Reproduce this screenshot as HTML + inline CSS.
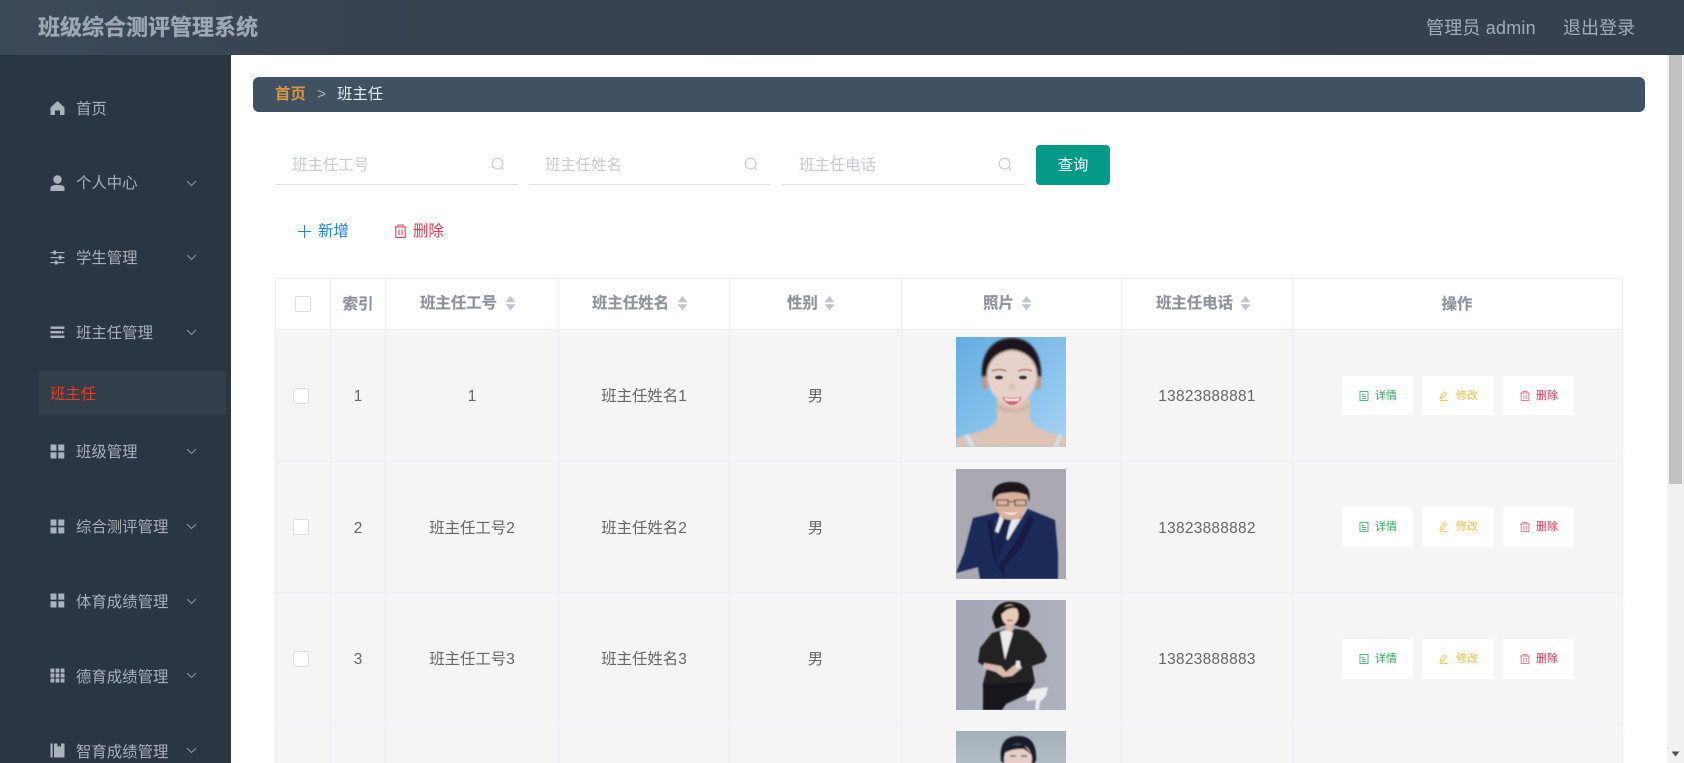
<!DOCTYPE html>
<html lang="zh-CN">
<head>
<meta charset="utf-8">
<title>班级综合测评管理系统</title>
<style>
html,body{margin:0;padding:0;width:1684px;height:763px;overflow:hidden;background:#fff}
body{font-family:"Liberation Sans","Noto Sans CJK SC",sans-serif;position:relative}
.a{position:absolute;white-space:nowrap}
.c{text-align:center}
svg{position:absolute;display:block}
.nav{position:absolute;left:76px;font-size:15.4px;line-height:20px;color:#a9b0b9;white-space:nowrap}
.ph{position:absolute;top:156px;font-size:15.4px;line-height:20px;color:#c6cad1;white-space:nowrap}
.ul{position:absolute;top:184px;height:1px;background:#dcdfe6}
.vl{position:absolute;top:278px;height:485px;width:1px;background:#ebeef5}
.hl{position:absolute;left:275px;width:1348px;height:1px;background:#ebeef5}
.th{position:absolute;font-size:15.4px;line-height:20px;font-weight:bold;color:#8f939b;text-align:center;white-space:nowrap;-webkit-text-stroke:.2px #8f939b}
.td{position:absolute;font-size:15.4px;line-height:20px;color:#666;text-align:center;white-space:nowrap}
.cb{position:absolute;width:14px;height:14px;background:#fff;border:1px solid #dcdfe6;border-radius:2px}
.btn{position:absolute;height:39px;background:#fff;font-size:11px;line-height:40px;white-space:nowrap}
.btn span{position:absolute;top:0}
</style>
</head>
<body>
<!-- sidebar -->
<div class="a" style="left:0;top:55px;width:231px;height:708px;background:#2a3643"></div>
<!-- header -->
<div class="a" style="left:0;top:0;width:1684px;height:55px;background:linear-gradient(90deg,#3c4959 0,#37424f 25%,#36414d 100%)"></div>
<div class="a" style="left:38px;top:12px;font-size:22px;line-height:32px;font-weight:bold;color:#9ea7b2;-webkit-text-stroke:.35px #9ea7b2">班级综合测评管理系统</div>
<div class="a" style="left:1426px;top:15px;font-size:18px;line-height:26px;letter-spacing:.2px;color:#a0adbb">管理员 admin</div>
<div class="a" style="left:1563px;top:15px;font-size:18px;line-height:26px;color:#a0adbb">退出登录</div>

<!-- sidebar icons -->
<svg style="left:50px;top:100px" width="15" height="16" viewBox="0 0 15 16" fill="#aab2bc"><path d="M7.5 1L0.5 7.5V15H5V10.5H10V15H14.5V7.5Z"/></svg>
<svg style="left:50px;top:175px" width="15" height="17" viewBox="0 0 15 17" fill="#aab2bc"><circle cx="7.5" cy="4.5" r="4.2"/><path d="M0.5 16V12.5C0.5 11 3 10 7.5 10S14.5 11 14.5 12.5V16Z"/></svg>
<svg style="left:50px;top:250px" width="15" height="15" viewBox="0 0 15 15" fill="#aab2bc"><rect x="0.5" y="2" width="14" height="1.2"/><rect x="0.5" y="7" width="14" height="1.2"/><rect x="0.5" y="12" width="14" height="1.2"/><rect x="3.5" y="0.5" width="2.5" height="4"/><rect x="9" y="5.5" width="2.5" height="4"/><rect x="5" y="10.5" width="2.5" height="4"/></svg>
<svg style="left:50px;top:326px" width="15" height="13" viewBox="0 0 15 13" fill="#aab2bc"><rect x="0.5" y="0.5" width="14" height="2.4"/><rect x="0.5" y="5" width="11" height="2.4"/><path d="M12 4.5L14.5 6.2L12 8Z"/><rect x="0.5" y="9.6" width="14" height="2.4"/></svg>
<svg style="left:50px;top:444px" width="15" height="15" viewBox="0 0 15 15" fill="#aab2bc"><rect x="0.5" y="0.5" width="6" height="6.2"/><rect x="8.3" y="0.5" width="6" height="6.2"/><rect x="0.5" y="8.3" width="6" height="6.2"/><rect x="8.3" y="8.3" width="6" height="6.2"/></svg>
<svg style="left:50px;top:519px" width="15" height="15" viewBox="0 0 15 15" fill="#aab2bc"><rect x="0.5" y="0.5" width="6" height="6.2"/><rect x="8.3" y="0.5" width="6" height="6.2"/><rect x="0.5" y="8.3" width="6" height="6.2"/><rect x="8.3" y="8.3" width="6" height="6.2"/></svg>
<svg style="left:50px;top:593px" width="15" height="15" viewBox="0 0 15 15" fill="#aab2bc"><rect x="0.5" y="0.5" width="6" height="6.2"/><rect x="8.3" y="0.5" width="6" height="6.2"/><rect x="0.5" y="8.3" width="6" height="6.2"/><rect x="8.3" y="8.3" width="6" height="6.2"/></svg>
<svg style="left:50px;top:668px" width="15" height="15" viewBox="0 0 15 15" fill="#aab2bc"><rect x="0.5" y="0.5" width="3.8" height="4"/><rect x="5.6" y="0.5" width="3.8" height="4"/><rect x="10.7" y="0.5" width="3.8" height="4"/><rect x="0.5" y="5.5" width="3.8" height="4"/><rect x="5.6" y="5.5" width="3.8" height="4"/><rect x="10.7" y="5.5" width="3.8" height="4"/><rect x="0.5" y="10.5" width="3.8" height="4"/><rect x="5.6" y="10.5" width="3.8" height="4"/><rect x="10.7" y="10.5" width="3.8" height="4"/></svg>
<svg style="left:50px;top:743px" width="15" height="15" viewBox="0 0 15 15" fill="#aab2bc"><rect x="0.5" y="0.5" width="2.2" height="14"/><path d="M4 0.5H7.5V4L9.2 2.8L11 4V0.5H14.5V14.5H4Z"/></svg>

<!-- sidebar text -->
<div class="nav" style="top:100px">首页</div>
<div class="nav" style="top:174px">个人中心</div>
<div class="nav" style="top:249px">学生管理</div>
<div class="nav" style="top:324px">班主任管理</div>
<div class="a" style="left:39px;top:371px;width:187px;height:44px;background:#333e4b"></div>
<div class="a" style="left:50px;top:385px;font-size:15.4px;line-height:20px;color:#e2401f">班主任</div>
<div class="nav" style="top:443px">班级管理</div>
<div class="nav" style="top:518px">综合测评管理</div>
<div class="nav" style="top:593px">体育成绩管理</div>
<div class="nav" style="top:668px">德育成绩管理</div>
<div class="nav" style="top:743px">智育成绩管理</div>

<!-- sidebar arrows -->
<svg style="left:186px;top:180px" width="11" height="7" viewBox="0 0 11 7" fill="none" stroke="#8f98a3"><path d="M1 1L5.5 5.5L10 1"/></svg>
<svg style="left:186px;top:254px" width="11" height="7" viewBox="0 0 11 7" fill="none" stroke="#8f98a3"><path d="M1 1L5.5 5.5L10 1"/></svg>
<svg style="left:186px;top:329px" width="11" height="7" viewBox="0 0 11 7" fill="none" stroke="#8f98a3"><path d="M1 1L5.5 5.5L10 1"/></svg>
<svg style="left:186px;top:448px" width="11" height="7" viewBox="0 0 11 7" fill="none" stroke="#8f98a3"><path d="M1 1L5.5 5.5L10 1"/></svg>
<svg style="left:186px;top:523px" width="11" height="7" viewBox="0 0 11 7" fill="none" stroke="#8f98a3"><path d="M1 1L5.5 5.5L10 1"/></svg>
<svg style="left:186px;top:598px" width="11" height="7" viewBox="0 0 11 7" fill="none" stroke="#8f98a3"><path d="M1 1L5.5 5.5L10 1"/></svg>
<svg style="left:186px;top:672px" width="11" height="7" viewBox="0 0 11 7" fill="none" stroke="#8f98a3"><path d="M1 1L5.5 5.5L10 1"/></svg>
<svg style="left:186px;top:747px" width="11" height="7" viewBox="0 0 11 7" fill="none" stroke="#8f98a3"><path d="M1 1L5.5 5.5L10 1"/></svg>

<!-- breadcrumb -->
<div class="a" style="left:253px;top:77px;width:1392px;height:35px;background:#405162;border-radius:6px"></div>
<div class="a" style="left:275px;top:85px;font-size:15.4px;line-height:20px;font-weight:bold;color:#d9963f">首页</div>
<div class="a" style="left:317px;top:85px;font-size:15.4px;line-height:20px;color:#a9b3bd">&gt;</div>
<div class="a" style="left:337px;top:85px;font-size:15.4px;line-height:20px;color:#e8edf1">班主任</div>

<!-- search -->
<div class="ph" style="left:292px">班主任工号</div>
<div class="ul" style="left:275px;width:243px"></div>
<svg style="left:491px;top:157px" width="14" height="14" viewBox="0 0 14 14" fill="none" stroke="#c6cad1" stroke-width="1.1"><circle cx="6.6" cy="6.6" r="5.4"/><path d="M10.4 10.4L12.8 12.8"/></svg>
<div class="ph" style="left:545px">班主任姓名</div>
<div class="ul" style="left:529px;width:242px"></div>
<svg style="left:744px;top:157px" width="14" height="14" viewBox="0 0 14 14" fill="none" stroke="#c6cad1" stroke-width="1.1"><circle cx="6.6" cy="6.6" r="5.4"/><path d="M10.4 10.4L12.8 12.8"/></svg>
<div class="ph" style="left:799px">班主任电话</div>
<div class="ul" style="left:782px;width:243px"></div>
<svg style="left:998px;top:157px" width="14" height="14" viewBox="0 0 14 14" fill="none" stroke="#c6cad1" stroke-width="1.1"><circle cx="6.6" cy="6.6" r="5.4"/><path d="M10.4 10.4L12.8 12.8"/></svg>
<div class="a c" style="left:1036px;top:145px;width:74px;height:40px;background:#039a87;border-radius:4px;color:#fff;font-size:15.4px;line-height:41px">查询</div>

<!-- actions -->
<svg style="left:298px;top:225px" width="13" height="13" viewBox="0 0 13 13" stroke="#1a7fff" stroke-width="1"><path d="M6.5 0V13M0 6.5H13"/></svg>
<div class="a" style="left:318px;top:222px;font-size:15.4px;line-height:20px;color:#1a7fff">新增</div>
<svg style="left:394px;top:224px" width="13" height="14" viewBox="0 0 13 14" fill="none" stroke="#e8434e" stroke-width="1.1"><path d="M0.5 3H12.5M4 3V1H9V3M1.8 3V13.4H11.2V3M5 5.5V11M8 5.5V11"/></svg>
<div class="a" style="left:413px;top:222px;font-size:15.4px;line-height:20px;color:#e83a4a">删除</div>

<!-- table -->
<div class="a" style="left:275px;top:329px;width:1348px;height:434px;background:#f5f5f5"></div>
<div class="hl" style="top:278px"></div>
<div class="hl" style="top:329px"></div>
<div class="hl" style="top:461px"></div>
<div class="hl" style="top:592px"></div>
<div class="hl" style="top:724px"></div>
<div class="vl" style="left:275px"></div>
<div class="vl" style="left:330px"></div>
<div class="vl" style="left:385px"></div>
<div class="vl" style="left:558px"></div>
<div class="vl" style="left:729px"></div>
<div class="vl" style="left:901px"></div>
<div class="vl" style="left:1121px"></div>
<div class="vl" style="left:1292px"></div>
<div class="vl" style="left:1622px"></div>

<div class="cb" style="left:295px;top:296px"></div>
<div class="th" style="left:331px;width:54px;top:295px">索引</div>
<div class="th" style="left:420px;top:294px">班主任工号</div>
<div class="th" style="left:592px;top:294px">班主任姓名</div>
<div class="th" style="left:787px;top:294px">性别</div>
<div class="th" style="left:983px;top:294px">照片</div>
<div class="th" style="left:1156px;top:294px">班主任电话</div>
<div class="th" style="left:1292px;width:330px;top:295px">操作</div>

<svg style="left:505px;top:296px" width="11" height="15" viewBox="0 0 11 15" fill="#c0c4cc"><path d="M5.5 0L10.5 6.2H0.5Z"/><path d="M5.5 14.5L10.5 8.3H0.5Z"/></svg>
<svg style="left:677px;top:296px" width="11" height="15" viewBox="0 0 11 15" fill="#c0c4cc"><path d="M5.5 0L10.5 6.2H0.5Z"/><path d="M5.5 14.5L10.5 8.3H0.5Z"/></svg>
<svg style="left:824px;top:296px" width="11" height="15" viewBox="0 0 11 15" fill="#c0c4cc"><path d="M5.5 0L10.5 6.2H0.5Z"/><path d="M5.5 14.5L10.5 8.3H0.5Z"/></svg>
<svg style="left:1021px;top:296px" width="11" height="15" viewBox="0 0 11 15" fill="#c0c4cc"><path d="M5.5 0L10.5 6.2H0.5Z"/><path d="M5.5 14.5L10.5 8.3H0.5Z"/></svg>
<svg style="left:1240px;top:296px" width="11" height="15" viewBox="0 0 11 15" fill="#c0c4cc"><path d="M5.5 0L10.5 6.2H0.5Z"/><path d="M5.5 14.5L10.5 8.3H0.5Z"/></svg>

<!-- rows -->
<div class="cb" style="left:293px;top:388px"></div>
<div class="td" style="left:331px;width:54px;top:387px">1</div>
<div class="td" style="left:386px;width:172px;top:387px">1</div>
<div class="td" style="left:559px;width:170px;top:387px">班主任姓名1</div>
<div class="td" style="left:730px;width:171px;top:387px">男</div>
<div class="td" style="left:1122px;width:170px;top:387px;letter-spacing:.3px">13823888881</div>

<div class="cb" style="left:293px;top:519px"></div>
<div class="td" style="left:331px;width:54px;top:519px">2</div>
<div class="td" style="left:386px;width:172px;top:519px">班主任工号2</div>
<div class="td" style="left:559px;width:170px;top:519px">班主任姓名2</div>
<div class="td" style="left:730px;width:171px;top:519px">男</div>
<div class="td" style="left:1122px;width:170px;top:519px;letter-spacing:.3px">13823888882</div>

<div class="cb" style="left:293px;top:651px"></div>
<div class="td" style="left:331px;width:54px;top:650px">3</div>
<div class="td" style="left:386px;width:172px;top:650px">班主任工号3</div>
<div class="td" style="left:559px;width:170px;top:650px">班主任姓名3</div>
<div class="td" style="left:730px;width:171px;top:650px">男</div>
<div class="td" style="left:1122px;width:170px;top:650px;letter-spacing:.3px">13823888883</div>

<!-- buttons row 1 -->
<div class="btn" style="left:1342px;top:376px;width:71px;color:#2fa85c"><span style="left:33px">详情</span><svg style="left:17px;top:15px" width="10" height="10" viewBox="0 0 10 10" fill="none" stroke="#55b87a"><path d="M1 .5H9V9.5H1ZM3 3.5H5M3 5.5H7M3 7.5H7"/></svg></div>
<div class="btn" style="left:1422px;top:376px;width:72px;color:#fbbb3c"><span style="left:34px">修改</span><svg style="left:17px;top:15px" width="10" height="10" viewBox="0 0 10 10" fill="none" stroke="#fcc766"><path d="M1 8L1.5 5.5L5.5 .8L7.5 2.5L3.3 7.4ZM1 9.5H9"/></svg></div>
<div class="btn" style="left:1503px;top:376px;width:71px;color:#e5304e"><span style="left:33px">删除</span><svg style="left:17px;top:15px" width="10" height="10" viewBox="0 0 10 10" fill="none" stroke="#e97f8f"><path d="M0 2H10M3 2V.5H7V2M1.2 2V9.5H8.8V2M3.8 4V8M6.2 4V8"/></svg></div>
<!-- buttons row 2 -->
<div class="btn" style="left:1342px;top:507px;width:71px;height:40px;color:#2fa85c"><span style="left:33px">详情</span><svg style="left:17px;top:15px" width="10" height="10" viewBox="0 0 10 10" fill="none" stroke="#55b87a"><path d="M1 .5H9V9.5H1ZM3 3.5H5M3 5.5H7M3 7.5H7"/></svg></div>
<div class="btn" style="left:1422px;top:507px;width:72px;height:40px;color:#fbbb3c"><span style="left:34px">修改</span><svg style="left:17px;top:15px" width="10" height="10" viewBox="0 0 10 10" fill="none" stroke="#fcc766"><path d="M1 8L1.5 5.5L5.5 .8L7.5 2.5L3.3 7.4ZM1 9.5H9"/></svg></div>
<div class="btn" style="left:1503px;top:507px;width:71px;height:40px;color:#e5304e"><span style="left:33px">删除</span><svg style="left:17px;top:15px" width="10" height="10" viewBox="0 0 10 10" fill="none" stroke="#e97f8f"><path d="M0 2H10M3 2V.5H7V2M1.2 2V9.5H8.8V2M3.8 4V8M6.2 4V8"/></svg></div>
<!-- buttons row 3 -->
<div class="btn" style="left:1342px;top:639px;width:71px;height:40px;color:#2fa85c"><span style="left:33px">详情</span><svg style="left:17px;top:15px" width="10" height="10" viewBox="0 0 10 10" fill="none" stroke="#55b87a"><path d="M1 .5H9V9.5H1ZM3 3.5H5M3 5.5H7M3 7.5H7"/></svg></div>
<div class="btn" style="left:1422px;top:639px;width:72px;height:40px;color:#fbbb3c"><span style="left:34px">修改</span><svg style="left:17px;top:15px" width="10" height="10" viewBox="0 0 10 10" fill="none" stroke="#fcc766"><path d="M1 8L1.5 5.5L5.5 .8L7.5 2.5L3.3 7.4ZM1 9.5H9"/></svg></div>
<div class="btn" style="left:1503px;top:639px;width:71px;height:40px;color:#e5304e"><span style="left:33px">删除</span><svg style="left:17px;top:15px" width="10" height="10" viewBox="0 0 10 10" fill="none" stroke="#e97f8f"><path d="M0 2H10M3 2V.5H7V2M1.2 2V9.5H8.8V2M3.8 4V8M6.2 4V8"/></svg></div>

<!-- portrait 1 -->
<svg style="left:956px;top:337px" width="110" height="110" viewBox="0 0 110 110">
<defs>
<linearGradient id="g1" x1="0" y1="0" x2="1" y2="1"><stop offset="0" stop-color="#62ade2"/><stop offset="1" stop-color="#a5d3f3"/></linearGradient>
<filter id="b1" x="-5%" y="-5%" width="110%" height="110%"><feGaussianBlur stdDeviation="1"/></filter>
<filter id="b1s" x="-20%" y="-20%" width="140%" height="140%"><feGaussianBlur stdDeviation=".4"/></filter>
<clipPath id="c1"><rect width="110" height="110"/></clipPath>
</defs>
<rect width="110" height="110" fill="url(#g1)"/>
<g filter="url(#b1)" clip-path="url(#c1)">
<path d="M0 110V101L25 94Q38 90 41 82V62H74V82Q78 90 90 94L110 100V110Z" fill="#dec4b4"/>
<path d="M8 98L15 110H19L12 97ZM103 97L98 110H101L106 98Z" fill="#cfe4f2"/>
<path d="M42 66Q57 78 73 66V72Q57 80 42 72Z" fill="#d2b5a5"/>
<path d="M26 40C24 15 38 1 56 1C74 1 86 15 85 40L82 48H30Z" fill="#1b181b"/>
<ellipse cx="29" cy="46" rx="3.5" ry="7" fill="#b99a8c"/>
<ellipse cx="82" cy="46" rx="3.5" ry="7" fill="#b99a8c"/>
<path d="M31 38C31 24 42 14 56 13C70 14 81 24 81 38C81 54 68 68 56 68C44 68 31 54 31 38Z" fill="#e7d2ca"/>
</g>
<g filter="url(#b1s)">
<path d="M36 34Q44 31 50 34M62 34Q70 31 76 34" stroke="#8a6256" stroke-width="1.1" fill="none"/>
<ellipse cx="43" cy="40.5" rx="4" ry="1.8" fill="#332e34"/>
<ellipse cx="67" cy="40.5" rx="4" ry="1.8" fill="#332e34"/>
<path d="M46 60Q56 62 66 60Q62 68 56 68Q50 68 46 60Z" fill="#d8646e"/>
<path d="M48 61Q56 63 64 61L62 64H50Z" fill="#f6efee"/>
<path d="M54 46L52 52Q56 55 60 52L58 46Z" fill="#dcc3ba"/>
</g>
</svg>

<!-- portrait 2 -->
<svg style="left:956px;top:469px" width="110" height="110" viewBox="0 0 110 110">
<defs><filter id="b2" x="-5%" y="-5%" width="110%" height="110%"><feGaussianBlur stdDeviation=".9"/></filter><clipPath id="c2"><rect width="110" height="110"/></clipPath></defs>
<rect width="110" height="110" fill="#a9a9b1"/>
<g filter="url(#b2)" clip-path="url(#c2)">
<path d="M0 104L8 84L17 49L43 43L72 40L99 51L102 85L102 110H24L22 98Z" fill="#1b2b58"/>
<path d="M31 52L36 50L38 75L42 98L37 88ZM74 45L60 72L42 98L50 110L48 98L66 78L78 50Z" fill="#141f44"/>
<path d="M45 43L71 40L52 71L39 62Z" fill="#e6e8f2"/>
<path d="M49 47L57 47L53 58L50 72L42 91L39 72Z" fill="#17244c"/>
<rect x="46" y="42" width="20" height="8" fill="#c69c88"/>
<ellipse cx="55" cy="32" rx="16.5" ry="19" fill="#d9b19c"/>
<path d="M37 33C34 17 44 13 55 13C67 13 76 17 73 33L71 26Q60 22 50 24Q42 24 39 29Z" fill="#1c191b"/>
<path d="M41 31H52V36.5H41ZM59 31H70V36.5H59ZM52 32.5H59" fill="none" stroke="#35302f" stroke-width="1.1"/>
<path d="M47 43Q55 48 63 43Q55 45 47 43Z" fill="#fff"/>
</g>
</svg>

<!-- portrait 3 -->
<svg style="left:956px;top:600px" width="110" height="110" viewBox="0 0 110 110">
<defs><linearGradient id="g3" x1="0" y1="0" x2="1" y2="0"><stop offset="0" stop-color="#a3a7b4"/><stop offset="1" stop-color="#aeb1bb"/></linearGradient><filter id="b3" x="-5%" y="-5%" width="110%" height="110%"><feGaussianBlur stdDeviation=".8"/></filter><clipPath id="c3"><rect width="110" height="110"/></clipPath></defs>
<rect width="110" height="110" fill="url(#g3)"/>
<g filter="url(#b3)" clip-path="url(#c3)">
<path d="M72 90L92 87L90 96L84 102L83 110H79L80 100L70 101Z" fill="#ecedef"/>
<path d="M27 110L27 82L79 82L72 94L50 104L46 110Z" fill="#19191b"/>
<path d="M36 33L50 29L62 29L72 31L85 44L91 56L88 62L76 66L79 82L27 84L31 68L22 62L24 48Z" fill="#222224"/>
<path d="M44 32L52 29L57 33L49 60Z" fill="#ecebeb"/>
<path d="M28 63L45 66L50 72L56 67L63 62L66 68L56 76L47 77L40 72L27 68Z" fill="#d9b9ad"/>
<rect x="60" y="61" width="4" height="7" fill="#e8e8ea"/>
<path d="M36 18C40 2 50 1 58 2C68 3 75 10 74 18C73 25 69 29 64 27L56 24L46 26L40 29Z" fill="#1c1918"/>
<ellipse cx="54" cy="15" rx="8.5" ry="10.5" fill="#e6cabc"/>
<path d="M45 11C48 5 58 3 63 9L58 8Q51 8 46 14Z" fill="#1c1918"/>
<rect x="50" y="24" width="7" height="7" fill="#dcbcae"/>
<path d="M51 20.5H57" stroke="#c93848" stroke-width="1.3"/>
</g>
</svg>

<!-- portrait 4 -->
<svg style="left:956px;top:731px" width="110" height="32" viewBox="0 0 110 32">
<defs><linearGradient id="g4" x1="0" y1="0" x2="0" y2="1"><stop offset="0" stop-color="#a4b0b8"/><stop offset="1" stop-color="#b2bcc4"/></linearGradient><filter id="b4" x="-5%" y="-5%" width="110%" height="110%"><feGaussianBlur stdDeviation=".8"/></filter></defs>
<rect width="110" height="32" fill="url(#g4)"/>
<g filter="url(#b4)">
<path d="M45 30C43 12 50 5 62 5C74 5 81 12 80 30L76 34H50Z" fill="#151a2a"/>
<ellipse cx="62" cy="28" rx="14" ry="15" fill="#e6cfc6"/>
<path d="M48 22C52 14 60 12 68 14L76 24L68 18Q58 17 48 22Z" fill="#151a2a"/>
<path d="M54 25H60M65 25H71" stroke="#33303a" stroke-width="1.2"/>
</g>
</svg>

<!-- scrollbar -->
<div class="a" style="left:1667px;top:55px;width:17px;height:708px;background:#f1f1f1"></div>
<div class="a" style="left:1669px;top:55px;width:13px;height:429px;background:#c1c1c1"></div>
<svg style="left:1671px;top:750px" width="9" height="8" viewBox="0 0 9 8" fill="#505050"><path d="M0.5 1.5H8.5L4.5 6.5Z"/></svg>
</body>
</html>
